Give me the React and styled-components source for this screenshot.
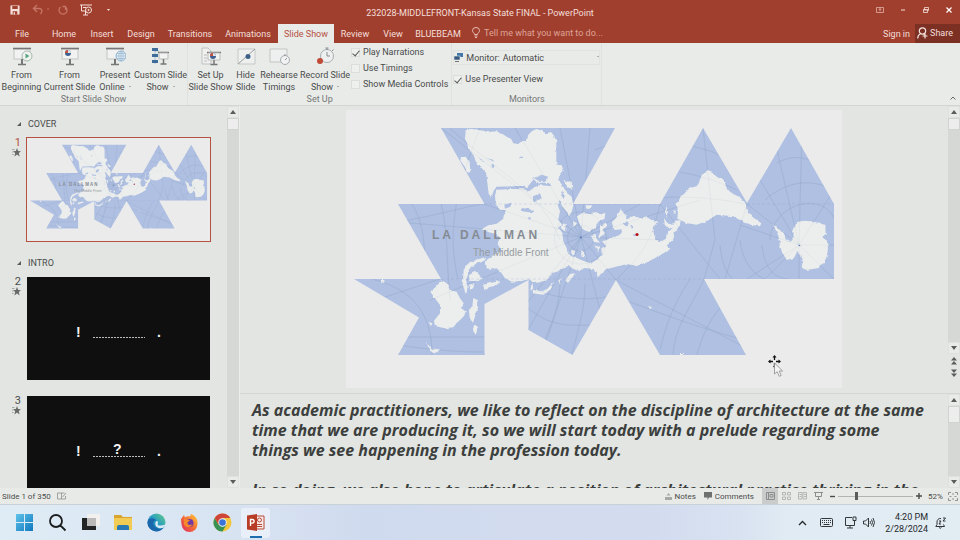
import React from 'react';
import styled, { createGlobalStyle, css } from 'styled-components';

const COLORS = {
  RED: '#a13f2e',
  RED_DARK: '#7c3024',
  RIBBON: '#e9ebe9',
  PANE: '#e2e5e2',
  SLIDE: '#ebebeb',
  LINE: '#d2d5d2',
  TRACK: '#d5d8d5',
  TEXT: '#4a4c4b',
  TEXT_LIGHT: '#757776',
  OCEAN: '#afc0e2',
  LAND: '#eceeed',
  GRID: '#8a9fcb',
};

const NOTES = `As academic practitioners, we like to reflect on the discipline of architecture at the same
time that we are producing it, so we will start today with a prelude regarding some
things we see happening in the profession today.

In so doing, we also hope to articulate a position of architectural practice thriving in the`;

const TABS = [
  { name: 'File', width: 44 },
  { name: 'Home', width: 40 },
  { name: 'Insert', width: 36 },
  { name: 'Design', width: 42 },
  { name: 'Transitions', width: 56 },
  { name: 'Animations', width: 60 },
  { name: 'Slide Show', width: 56, active: true },
  { name: 'Review', width: 42 },
  { name: 'View', width: 34 },
  { name: 'BLUEBEAM', width: 56 },
];

/* ---------- ribbon icons ---------- */

const Easel = () => (
  <g fill="none" stroke="#777">
    <rect x="3" y="3" width="16" height="10" fill="#f1f2f1" stroke="#c3c5c4" />
    <path d="M2 2.5h18" strokeWidth="1.6" />
    <path d="M11 13v5" strokeWidth="2" />
    <path d="M7 18.5h8" strokeWidth="1.5" />
  </g>
);

const Pie = ({ x, y }) => (
  <g transform={`translate(${x} ${y})`}>
    <circle r="3" fill="#3d5f92" />
    <path d="M0 0V-3A3 3 0 0 0 -3 0Z" fill="#c4543e" />
    <path d="M0 0H3A3 3 0 0 0 0 -3Z" fill="#dfe3e8" />
  </g>
);

const RIBBON_ICONS = {
  beginning: (
    <>
      <Easel />
      <circle cx="16" cy="10" r="5" fill="#f1f3f1" stroke="#a5b8ab" />
      <path d="M14.5 7.5v5l4-2.5z" fill="#57a37c" />
    </>
  ),
  current: <><Easel /><Pie x={9} y={7} /></>,
  online: (
    <>
      <Easel />
      <circle cx="17" cy="10" r="5" fill="#e8f0f6" stroke="#92b4d0" />
      <path d="M12 10h10M17 5v10M13 7.5h8M13 12.5h8M17 5c-3 3-3 7 0 10M17 5c3 3 3 7 0 10" fill="none" stroke="#92b4d0" strokeWidth=".7" />
    </>
  ),
  custom: (
    <>
      <path d="M5 3v15M5 5h4" stroke="#a9c2d8" />
      <path d="M2 2h6v3H2zM2 8h6v3H2zM2 14h6v3H2z" fill="#3f6c98" />
      <path d="M8 6.5h11" stroke="#777" strokeWidth="1.5" />
      <path d="M9 7h9v6H9z" fill="#f2f3f2" stroke="#bbb" />
      <path d="M13.5 13v5M10.5 18h6" stroke="#777" strokeWidth="1.5" />
    </>
  ),
  setup: (
    <>
      <path d="M2 2h6l3 3v13H2z" fill="#eff0ef" stroke="#bfc1c0" />
      <path d="M4 9h3M4 12h3M4 15h3" stroke="#bbb" />
      <path d="M7 6.5h14" stroke="#777" strokeWidth="1.5" />
      <path d="M8 7h12v7H8z" fill="#f2f3f2" stroke="#bbb" />
      <Pie x={13} y={10} />
      <path d="M14 14v4M10.5 18.5h7" stroke="#777" strokeWidth="1.5" />
    </>
  ),
  hide: (
    <>
      <path d="M3 3h17v15H3z" fill="#eef0ef" stroke="#c7c9c8" />
      <path d="M3 18L20 3" stroke="#9b9d9c" />
      <circle cx="13" cy="10.5" r="2.5" fill="#3d6189" />
    </>
  ),
  rehearse: (
    <>
      <path d="M2 3h17v13H2z" fill="#eef0ef" stroke="#c3c5c4" />
      <circle cx="17" cy="14" r="4.5" fill="#f1f2f1" stroke="#a6adb2" />
      <path d="M17 8v2M17 14l2-2" stroke="#8d959b" />
    </>
  ),
  record: (
    <>
      <circle cx="13" cy="10" r="6.5" fill="#eef0ef" stroke="#a6adb2" />
      <path d="M11.5 2h3M13 2v2M13 10V6M13 10h3M18 5l1.5-1.5" stroke="#858c91" />
      <circle cx="6" cy="15" r="3" fill="#bf4a36" />
    </>
  ),
};

const RibbonIcon = ({ name }) => (
  <svg width="22" height="21" viewBox="0 0 22 21" aria-hidden="true">{RIBBON_ICONS[name]}</svg>
);

/* ---------- slide artwork ---------- */

const OCEAN_PATH =
  'M441 128H615L573 204H660L703 128L747 203L791 128L834 204V279H704L746 355H660L616 280L572.5 355L528.5 330V280L484.5 304V355H398L419 317.5L354 279H441L398 204H484.5Z';

const GRATICULE =
  'M581 237L441 128M581 237L484 204M581 237L398 222M581 237L430 300M581 237L484 355M581 237L528 330M581 237L545 345M581 237L600 310M581 237L616 280M581 237L660 240M581 237L700 200M581 237L640 204M581 237L590 128M581 237L560 128M581 237L515 128' +
  'M450 128C500 175 540 190 560 240M480 128C460 180 445 225 458 279M398 222C440 215 470 205 484 204M412 204C425 225 425 250 425 279M441 204C448 230 446 255 450 300M372 279C415 290 432 315 432 355M398 345C430 350 460 352 484 352M405 337H484M385 297L440 279M528 308C548 325 565 326 590 325M535 290C560 300 590 300 607 297M560 280C560 310 548 330 545 340M585 284C585 310 578 330 572 354' +
  'M616 280L746 348M630 302C665 315 700 328 737 338M690 279C670 310 665 330 660 350M720 308C705 325 700 345 697 355M704 279C690 310 675 325 673 355M690 145C703 150 712 150 718 155M679 172C700 175 725 184 737 190M660 198C690 195 725 200 747 204M703 128L715 240L704 279M747 204L725 279M660 204L720 279M595 150L606 146' +
  'M799 245L777 150M799 245L802 129M799 245L760 180M799 245L834 190M799 245L834 245M799 245L834 279M799 245L799 279M799 245L765 279M799 245L747 279M799 245L740 225M799 245L747 204' +
  'M765 200C790 178 815 180 834 190M777 163C790 156 800 156 812 161M770 240C772 205 820 190 834 218M762 245C765 275 780 279 790 279M740 240C742 262 755 276 765 279M720 245C722 265 727 274 733 279M616 280C635 260 650 250 660 204M581 225A13 13 0 1 1 580 225M581 212A26 26 0 1 1 580 212';

const AFRO_EURASIA =
  'M362 70L375 62L400 66L415 68L430 72L455 70L470 76L487 88L498 92L505 106L520 108L532 98L545 100L550 80L562 68L575 63L590 68L603 76L618 72L628 84L634 100V170L650 172L656 188L645 202L640 216L656 236L662 252L680 266L685 292L680 312L672 325L664 310L648 290L644 276L638 290L645 310L640 335L652 352L642 360L652 374L655 400L665 420L668 436L685 448L700 452L722 461L752 470L745 484L722 480L700 490L670 474L650 480L640 490L625 494L600 518L575 524L550 514L530 519L500 521L480 511L470 496L455 481L435 486L420 471L425 456L445 442L470 430L458 408L465 390L450 377L430 372L410 364L430 352L455 347L475 332L482 306L465 305L452 290L450 262L455 245L500 243L540 244L550 252L560 244L580 232L620 234L612 226L575 222L566 214L545 240L535 234L455 236L446 248L440 266L431 258L426 215L424 196L410 180L392 160L386 142L375 128L368 110L360 92Z';

const WorldMap = () => (
  <svg viewBox="346 110 496 278" role="img" aria-label="Unfolded map of the world">
    <defs>
      <clipPath id="ocean-clip"><path d={OCEAN_PATH} /></clipPath>
      {/* roughens the straight segments into coast lines */}
      <filter id="coast" x="-5%" y="-5%" width="110%" height="110%">
        <feTurbulence type="fractalNoise" baseFrequency="0.2" numOctaves="2" seed="4" result="noise" />
        <feDisplacementMap in="SourceGraphic" in2="noise" scale="3" xChannelSelector="R" yChannelSelector="G" />
      </filter>
    </defs>
    <path d={OCEAN_PATH} fill={COLORS.OCEAN} />
    <g clipPath="url(#ocean-clip)">
      <path d={GRATICULE} fill="none" stroke={COLORS.GRID} strokeWidth=".6" opacity=".5" />
      <g fill={COLORS.LAND} filter="url(#coast)">
        <g transform="translate(345 108) scale(.3333)">
          <path d={AFRO_EURASIA} />
          <path d="M348 148L362 146L374 164L376 192L368 194L358 174L346 158Z" />
          <path d="M655 215L680 225L682 243L668 238ZM652 245L665 252L660 264ZM655 345L662 350L660 372L650 362ZM684 340L696 346L686 358ZM722 292H740V302H724ZM680 425L690 428L688 442L678 436ZM706 426L714 430L722 448L710 446Z" />
          <path d="M425 446L400 454L372 464L356 486L353 530L364 558L368 536L362 512L370 486L392 468L418 458Z" />
          <path d="M372 502L392 490L412 510L400 520L374 518ZM415 530L440 524L462 520L460 530L432 538L418 546ZM372 530L388 526L385 540L376 546ZM385 570L397 576L395 610L384 644L374 630L372 605L382 596ZM388 650L400 655L392 680L384 668ZM662 514L675 498L690 496L680 512L668 524ZM560 545L590 550L606 544L618 530L628 522L615 548L595 560L562 556ZM640 516L650 512L645 530ZM560 525L566 540L556 548Z" />
          <path d="M290 516L305 526L315 546L335 551L345 571L356 586L348 600L364 612L355 626L335 646L325 658L300 661L270 654L267 638L285 616V591L270 571L256 551L270 536Z" />
          <path d="M250 642L262 646L258 654ZM242 702L264 722L285 724L272 738L258 728ZM108 516H118V524H108Z" />
          <g fill={COLORS.OCEAN}>
            <path d="M440 168L448 170L447 180L440 178ZM524 146H534V153H524ZM478 290L500 284L496 296L480 302ZM530 300L565 305L564 314L532 310ZM566 264L585 256L590 270L572 282L562 282ZM400 150L418 158L416 162ZM425 150L446 156L444 160ZM550 328H560V334H550ZM566 210L590 200L610 206L604 220L580 218ZM648 250L660 264L654 274Z" />
          </g>
        </g>
        <g transform="translate(590 108) scale(.3333)">
          <path d="M66 342L78 330L92 304L106 320L112 334L130 324L148 330L166 325L195 342L206 342L194 352L190 370L196 395L215 400L228 392L230 376L246 362L256 338L272 337L270 352L252 376L246 398L228 414L240 424L205 445L180 458L140 474L110 468L75 478L50 482L38 492L24 508L10 482L5 465L20 455L35 440L34 424L48 416L42 402L60 390L88 382L96 364L74 366L68 354Z" />
          <path d="M-40 325L-22 315L0 318L20 315L46 316L44 332L24 342L16 360L-2 372L-18 366L-30 350ZM30 352L48 344L52 356L38 364L44 378L24 390L30 374ZM2 382L16 378L20 392L30 404L12 402ZM36 400L50 396L46 410ZM14 412L30 418L24 430Z" />
          <path d="M350 186L365 190L375 205L400 215L412 245L430 258L450 268L468 288L470 305L485 325L514 346L510 355L490 352L465 345L430 325L380 320L350 340L320 350L290 345L262 332L264 310L260 285L275 265L300 240L320 235L335 205Z" />
          <path d="M228 290L234 312L228 330ZM222 330L234 348L256 346L258 356L236 362L224 350ZM250 306L258 310L254 318Z" />
          <path d="M622 342L642 338L662 340L678 346L706 350L707 378L697 388L711 398L714 422L710 446L702 464L686 480L650 486L635 478L638 462L630 442L621 432L612 450L590 456L575 430L568 404L590 402L604 400L612 388L606 368Z" />
          <path d="M548 348L564 362L582 372L586 392L600 398L580 412L568 396L562 376Z" />
          <path d="M178 595H184V602H178ZM270 735H282V742H270Z" />
          <g fill={COLORS.OCEAN}>
            <path d="M98 346L112 340L118 350L106 354ZM120 352L132 358L126 362ZM128 376L138 380L132 386Z" />
          </g>
        </g>
      </g>
      <path d={GRATICULE} fill="none" stroke="#9fb4c4" strokeWidth=".5" opacity=".28" />
      <path d="M484 204H573M573 204H660M747 204H834M528 279H704M441 279H528" stroke={COLORS.GRID} strokeWidth=".5" strokeDasharray="3 2" opacity=".5" />
    </g>
    <circle cx="581" cy="237.5" r="1" fill="#5c7cba" />
    <circle cx="799.5" cy="245.5" r=".8" fill="#5c7cba" />
    <circle cx="637" cy="234.5" r="1.6" fill="#b3121d" />
    <CoverTitle x="432" y="239">LA DALLMAN</CoverTitle>
    <CoverSubtitle x="473" y="256">The Middle Front</CoverSubtitle>
  </svg>
);

const BlankLine = ({ question }) => (
  <svg viewBox="0 0 183 103" role="img" aria-label="Fill in the blank">
    <BlankMark x="49" y="60">!</BlankMark>
    {question && <BlankMark x="86" y="58">?</BlankMark>}
    <path d="M66 60.5h52" stroke="#bdbdbd" strokeDasharray="2 1" />
    <BlankMark x="130" y="60">.</BlankMark>
  </svg>
);

const ScrollArrow = ({ up }) => (
  <ArrowButton aria-label={up ? 'Scroll up' : 'Scroll down'}>
    <svg width="6" height="4" viewBox="0 0 6 4">
      <path d={up ? 'M0 4L3 0L6 4Z' : 'M0 0L3 4L6 0Z'} fill="#5b5d5c" />
    </svg>
  </ArrowButton>
);

const ScrollBar = ({ thumb, children }) => (
  <Bar>
    <ScrollArrow up />
    <Thumb $size={thumb} />
    <Track />
    <ScrollArrow />
    {children}
  </Bar>
);

const SlideItem = ({ number, active, children }) => (
  <Item>
    <ItemMeta $active={active}>
      {number}
      <svg width="9" height="9" viewBox="0 0 9 9">
        <path d="M5 0l1.1 2.9L9 3.2 6.8 5l.8 3.4L5 6.6 2.4 8.4 3.2 5 1 3.2l2.9-.3z" fill="#666968" />
        <path d="M0 1.5h2.5M0 4h1.5M0 6.5h1.5" stroke="#8b8e8c" strokeWidth=".7" />
      </svg>
    </ItemMeta>
    <Thumbnail $active={active} aria-label={`Slide ${number}`}>{children}</Thumbnail>
  </Item>
);

const Section = ({ name }) => (
  <SectionTitle>
    <svg width="4" height="4" viewBox="0 0 4 4"><path d="M4 0V4H0Z" fill="#5b5d5c" /></svg>
    {name}
  </SectionTitle>
);

const Large = ({ icon, width, lines, menu }) => (
  <LargeButton $width={width}>
    <RibbonIcon name={icon} />
    <span>{lines[0]}</span>
    <span>{lines[1]}{menu && <Caret />}</span>
  </LargeButton>
);

const Check = ({ label, checked }) => (
  <CheckLabel>
    <CheckBox type="checkbox" defaultChecked={checked} />
    {label}
  </CheckLabel>
);

const TitleBar = () => (
  <Title>
    <QuickAccess>
      <IconButton $width={30} aria-label="Save">
        <svg width="10" height="10" viewBox="0 0 11 11">
          <path d="M.5.5h10v10H.5z" fill="#f4dfda" />
          <path d="M2.500 1h6v3.500h-6zM3 7h5v3.500H3z" fill={COLORS.RED} />
          <path d="M4 8h1.500v2.500H4z" fill="#f4dfda" />
        </svg>
      </IconButton>
      <IconButton $width={22} aria-label="Undo">
        <svg width="18" height="11" viewBox="0 0 18 11" fill="none" stroke="#c67566" strokeWidth="1.4">
          <path d="M5 1L1.5 4.5L5 8M2 4.5h5c3 0 4 3 1.5 5.5" />
          <path d="M15 5h2" strokeWidth="1" />
        </svg>
      </IconButton>
      <IconButton $width={22} aria-label="Redo">
        <svg width="10" height="10" viewBox="0 0 10 10" fill="none" stroke="#c67566" strokeWidth="1.3">
          <path d="M2.5 2A4 4 0 1 0 7.5 2M7.5 5V1.5h-3" />
        </svg>
      </IconButton>
      <IconButton $width={24} aria-label="Start from beginning">
        <svg width="13" height="12" viewBox="0 0 13 12" fill="none" stroke="#f4dfda">
          <path d="M0 1h12M1.5 1v6h4M5.5 7v4M3 11h5M3 3.5h3" />
          <circle cx="8.5" cy="6" r="3" />
          <path d="M7.8 4.5v3l2-1.5z" fill="#f4dfda" stroke="none" />
        </svg>
      </IconButton>
      <IconButton $width={20} aria-label="Customize quick access">
        <svg width="3" height="2" viewBox="0 0 3 2"><path d="M0 0h3L1.5 2z" fill="#f4dfda" /></svg>
      </IconButton>
    </QuickAccess>
    <DocumentName>232028-MIDDLEFRONT-Kansas State FINAL - PowerPoint</DocumentName>
    <WindowButtons>
      <IconButton $width={23} aria-label="Ribbon display options">
        <svg width="8" height="6" viewBox="0 0 8 6" fill="none" stroke="#e3b0a5" strokeWidth=".8">
          <path d="M.5.5h7v5h-7zM4 1.5v3M2.8 3L4 1.5L5.2 3" />
        </svg>
      </IconButton>
      <IconButton $width={23} aria-label="Minimize">
        <svg width="4" height="2" viewBox="0 0 4 2"><path d="M0 1h4" stroke="#f4dfda" /></svg>
      </IconButton>
      <IconButton $width={23} aria-label="Restore">
        <svg width="6" height="6" viewBox="0 0 6 6" fill="none" stroke="#f4dfda" strokeWidth=".8">
          <path d="M.5 2.5h4v3h-4zM1.5 2.5v-2h4v3h-1M.5 3h4" />
        </svg>
      </IconButton>
      <IconButton $width={23} aria-label="Close">
        <svg width="6" height="6" viewBox="0 0 6 6"><path d="M.5.5l5 5M5.5.5l-5 5" stroke="#fff" strokeWidth="1.2" /></svg>
      </IconButton>
    </WindowButtons>
  </Title>
);

const TabBar = () => (
  <Tabs>
    {TABS.map(tab => (
      <Tab key={tab.name} $width={tab.width} $active={tab.active}>{tab.name}</Tab>
    ))}
    <TellMe>
      <svg width="8" height="11" viewBox="0 0 8 11" fill="none" stroke="#e8bfb6">
        <path d="M2.5 7.5C2.5 6 .5 5.5.5 3.5a3.5 3 0 0 1 7 0c0 2-2 2.5-2 4zM2.5 9h3M3 10.5h2" />
      </svg>
      <TellMeInput aria-label="Tell me" placeholder="Tell me what you want to do..." />
    </TellMe>
    <SignIn href="#signin">Sign in</SignIn>
    <Share>
      <svg width="11" height="12" viewBox="0 0 11 12" fill="none" stroke="#f6e4e0" strokeWidth="1.2">
        <circle cx="5.5" cy="4" r="3.2" />
        <path d="M.7 11.5C.7 9 2 7.5 3.5 6.8M6.5 7c.8.3 1 .6 1.3 1M8 6.5v5M5.5 9h5" />
      </svg>
      Share
    </Share>
  </Tabs>
);

const Ribbon = () => (
  <RibbonBar>
    <Group>
      <GroupBody>
        <Large icon="beginning" width={43} lines={['From', 'Beginning']} />
        <Large icon="current" width={53} lines={['From', 'Current Slide']} />
        <Large icon="online" width={38} lines={['Present', 'Online']} menu />
        <Large icon="custom" width={53} lines={['Custom Slide', 'Show']} menu />
      </GroupBody>
      <GroupName>Start Slide Show</GroupName>
    </Group>
    <Group>
      <GroupBody>
        <Large icon="setup" width={45} lines={['Set Up', 'Slide Show']} />
        <Large icon="hide" width={25} lines={['Hide', 'Slide']} />
        <Large icon="rehearse" width={42} lines={['Rehearse', 'Timings']} />
        <Large icon="record" width={50} lines={['Record Slide', 'Show']} menu />
        <Checks>
          <Check label="Play Narrations" checked />
          <Check label="Use Timings" />
          <Check label="Show Media Controls" />
        </Checks>
      </GroupBody>
      <GroupName>Set Up</GroupName>
    </Group>
    <Group>
      <MonitorBody>
        <MonitorRow>
          <svg width="9" height="9" viewBox="0 0 9 9">
            <path d="M3 0h6v4H3z" fill="#4478ab" />
            <path d="M0 3h6v4H0z" fill="#35597f" stroke="#e9ebe9" strokeWidth=".6" />
            <path d="M1 8.5h4" stroke="#777" />
          </svg>
          <label htmlFor="monitor">Monitor:</label>
          <MonitorSelect id="monitor" defaultValue="auto">
            <option value="auto">Automatic</option>
            <option value="primary">Primary Monitor</option>
          </MonitorSelect>
          <Caret />
        </MonitorRow>
        <Check label="Use Presenter View" checked />
      </MonitorBody>
      <GroupName>Monitors</GroupName>
    </Group>
    <Collapse aria-label="Collapse the ribbon">
      <svg width="6" height="4" viewBox="0 0 6 4"><path d="M.5 3.5L3 1L5.5 3.5" fill="none" stroke="#666" /></svg>
    </Collapse>
  </RibbonBar>
);

const MoveCursor = () => (
  <Cursor width="15" height="23" viewBox="0 0 15 23">
    <path d="M6.5 1v4M6.5 8v4M1 6.5h4M8 6.5h4" stroke="#111" strokeWidth="1.3" />
    <path d="M6.5 0L8.5 2.5h-4zM0 6.5L2.5 4.5v4zM13 6.5L10.5 4.5v4zM6.5 13L5 11h3z" fill="#111" />
    <path d="M6.5 8v11l2.7-2.3 2 4.6 2-.9-2-4.4h3.4z" fill="#f4f4f4" stroke="#8c8c8c" strokeWidth=".8" />
  </Cursor>
);

const StatusBar = () => (
  <Status>
    <span>Slide 1 of 350</span>
    <StatusButton $width={22} aria-label="Spelling">
      <svg width="10" height="8" viewBox="0 0 10 8" fill="none" stroke="#8d908e" strokeWidth=".8">
        <path d="M.5 1h4v6h-4zM4.5 1h3M4.5 7h4V4M5.5 5l3.5-4" />
      </svg>
    </StatusButton>
    <Spacer />
    <StatusButton>
      <svg width="7" height="7" viewBox="0 0 7 7"><path d="M3.5 0l2 2.5h-4zM0 4h7v3H0z" fill="#a5a8a6" /></svg>
      Notes
    </StatusButton>
    <StatusButton>
      <svg width="8" height="8" viewBox="0 0 8 8"><path d="M0 0h8v5.5H5L3.5 8V5.5H0z" fill="#6d706e" /></svg>
      Comments
    </StatusButton>
    <Views>
      <StatusButton $width={16} $active aria-label="Normal view">
        <svg width="9" height="8" viewBox="0 0 9 8" fill="none" stroke="#8b8e8c"><path d="M.5.5h8v7h-8zM2.5 1v6M4 2.5h3v2.5h-3z" /></svg>
      </StatusButton>
      <StatusButton $width={16} aria-label="Slide sorter">
        <svg width="9" height="8" viewBox="0 0 9 8" fill="none" stroke="#b4b7b5"><path d="M.5.5h3v2.5h-3zM5.5.5h3v2.5h-3zM.5 5h3v2.5h-3zM5.5 5h3v2.5h-3z" /></svg>
      </StatusButton>
      <StatusButton $width={16} aria-label="Reading view">
        <svg width="9" height="8" viewBox="0 0 9 8" fill="none" stroke="#b4b7b5"><path d="M.5.5h3.5v6.5H.5zM5 .5h3.5v6.5H5zM1.5 2.5h2M1.5 4.5h2M6 2.5h2M6 4.5h2" /></svg>
      </StatusButton>
      <StatusButton $width={16} aria-label="Slide show">
        <svg width="9" height="8" viewBox="0 0 9 8" fill="none" stroke="#8b8e8c"><path d="M0 .5h9M1.5 1v3.500h6V1M4.5 4.5v3M3 7.500h3" /></svg>
      </StatusButton>
    </Views>
    <StatusButton $width={12} aria-label="Zoom out">
      <svg width="5" height="5" viewBox="0 0 5 5"><path d="M0 2.5h5" stroke="#4a4c4b" strokeWidth="1.4" /></svg>
    </StatusButton>
    <Zoom type="range" aria-label="Zoom" min="0" max="100" defaultValue="24" />
    <StatusButton $width={12} aria-label="Zoom in">
      <svg width="6" height="6" viewBox="0 0 6 6"><path d="M0 3h6M3 0v6" stroke="#4a4c4b" strokeWidth="1.4" /></svg>
    </StatusButton>
    <ZoomValue>52%</ZoomValue>
    <StatusButton $width={14} aria-label="Fit slide to window">
      <svg width="10" height="9" viewBox="0 0 10 9" fill="none" stroke="#7c7f7d" strokeWidth=".8">
        <path d="M3 .5H.5V3M7 .5h2.5V3M3 8.5H.5V6M7 8.5h2.5V6M5 1v2M5 6v2M1.5 4.5h2M6.5 4.5h2" />
      </svg>
    </StatusButton>
  </Status>
);

const APPS = [
  {
    name: 'Start',
    icon: <path d="M1 1h8v8H1zM10 1h8v8h-8zM1 10h8v8H1zM10 10h8v8h-8z" fill="url(#win)" />,
  },
  {
    name: 'Search',
    icon: <path d="M14 8A6 6 0 1 1 2 8A6 6 0 1 1 14 8M12.5 12.5L17.5 17.5" fill="none" stroke="#1c1f21" strokeWidth="1.8" />,
  },
  {
    name: 'Task view',
    icon: (
      <>
        <path d="M6 1h13v12H6z" fill="#f2f1ef" />
        <path d="M1 5h14v12H1z" fill="#222426" />
        <path d="M6 5h9v8H6z" fill="#b9bab9" />
      </>
    ),
  },
  {
    name: 'File Explorer',
    icon: (
      <>
        <path d="M0 2h7l2 2h9v4H0z" fill="#d9a52f" />
        <path d="M0 5h18v12H0z" fill="#f2cb55" />
        <path d="M3 17v-3q0-2 2-2h8q2 0 2 2v3z" fill="#2878b4" />
      </>
    ),
  },
  {
    name: 'Edge',
    icon: (
      <>
        <circle cx="9.5" cy="9.5" r="9" fill="url(#edge)" />
        <path d="M1 7C4 4 8 5 9.500 7.500C6 7 5 11 8 14c2.500 2.300 6 2 8.500.500C14 18 10 19 7 18C2 16.500-.5 12 1 7z" fill="#1a67ac" />
        <path d="M9.500 8c1.500.2 2 1.500 1.200 3c-.5 1.500 3 2.500 7.600.500c-.5 1.500-1 2.500-2 3.200c-3.500 1.300-8-.2-8-4c0-1.200.5-2 1.200-2.700z" fill="#dbeaf4" />
      </>
    ),
  },
  {
    name: 'Firefox',
    icon: (
      <>
        <path d="M1 6L4 2l1 2.5C7 3 8 3 10 3.5L11 1c5 2 7 6 6.5 10A8 8 0 0 1 1.5 11C1.2 9 1 8 1 6z" fill="url(#fox)" />
        <circle cx="9.5" cy="10" r="4" fill="#733ba4" />
        <path d="M4 6c3 0 4 .5 6 1.5-1 1-2.5 1-2.5 2.5 0 2 3 3 5 1-1 4-7 4-8.5.5z" fill="#f58a2c" />
      </>
    ),
  },
  {
    name: 'Chrome',
    icon: (
      <>
        <circle cx="9.5" cy="9.5" r="9" fill="#f4c63d" />
        <path d="M1.7 5A9 9 0 0 0 9.5 18.5L13.4 11.8H5.6Z" fill="#389254" />
        <path d="M1.7 5A9 9 0 0 1 17.3 5H9.5L5.6 11.8Z" fill="#cf4537" />
        <circle cx="9.5" cy="9.5" r="4.2" fill="#f3f3f3" />
        <circle cx="9.5" cy="9.5" r="3.3" fill="#3a74d8" />
      </>
    ),
  },
  {
    name: 'PowerPoint',
    active: true,
    icon: (
      <>
        <path d="M9 3h9v13H9z" fill="#f6eae7" stroke="#b94b38" />
        <circle cx="13.5" cy="7" r="2" fill="none" stroke="#b94b38" />
        <path d="M11 11.5h5M11 13.5h5" stroke="#b94b38" />
        <path d="M1 2.5L11 1v17L1 16.5z" fill="#b83b25" />
        <path d="M4.500 13V6.500h1.800a1.800 1.800 0 0 1 0 3.600H4.500" fill="none" stroke="#fff" strokeWidth="1.4" />
      </>
    ),
  },
];

const TaskBar = () => (
  <Task>
    <svg width="0" height="0" aria-hidden="true">
      <defs>
        <linearGradient id="win" x1="0" y1="0" x2="1" y2="1">
          <stop offset="0" stopColor="#5fc4ea" /><stop offset="1" stopColor="#1278bf" />
        </linearGradient>
        <linearGradient id="edge" x1="0" y1="1" x2="1" y2="0">
          <stop offset="0" stopColor="#1763ac" /><stop offset=".5" stopColor="#279cc5" /><stop offset="1" stopColor="#67cf83" />
        </linearGradient>
        <linearGradient id="fox" x1="1" y1="0" x2="0" y2="1">
          <stop offset="0" stopColor="#ffd23c" /><stop offset=".5" stopColor="#f46c35" /><stop offset="1" stopColor="#dd2865" />
        </linearGradient>
      </defs>
    </svg>
    {APPS.map(app => (
      <AppButton key={app.name} $active={app.active} aria-label={app.name}>
        <svg width="19" height="19" viewBox="0 0 19 19">{app.icon}</svg>
      </AppButton>
    ))}
    <Spacer />
    <TrayButton $width={24} aria-label="Hidden icons">
      <svg width="9" height="6" viewBox="0 0 9 6"><path d="M1 5L4.5 1.5L8 5" fill="none" stroke="#26292b" strokeWidth="1.3" /></svg>
    </TrayButton>
    <TrayButton $width={24} aria-label="Touch keyboard">
      <svg width="13" height="9" viewBox="0 0 13 9" fill="none" stroke="#33373a">
        <rect x=".5" y=".5" width="12" height="8" rx="1" />
        <path d="M2 2.5h9M2 4.5h9" strokeDasharray="1 1" />
        <path d="M3.5 6.5h6" />
      </svg>
    </TrayButton>
    <TrayButton $width={24} aria-label="Network">
      <svg width="13" height="13" viewBox="0 0 13 13" fill="none" stroke="#33373a">
        <path d="M8 1.5H1.5v8h9V8M3 12h6M6 9.5V12" />
        <path d="M9 1h3v3.5H9zM10.5 4.5V8" />
      </svg>
    </TrayButton>
    <TrayButton $width={13} aria-label="Volume">
      <svg width="12" height="11" viewBox="0 0 12 11" fill="none" stroke="#33373a">
        <path d="M.5 4h2L5.5 1v9l-3-3h-2zM7 4q1 1.5 0 3M8.5 2.5q2 3 0 6M10 1q3 4.5 0 9" />
      </svg>
    </TrayButton>
    <Clock><span>4:20 PM</span><span>2/28/2024</span></Clock>
    <TrayButton $width={24} aria-label="Notifications">
      <svg width="11" height="12" viewBox="0 0 11 12" fill="none" stroke="#33373a">
        <path d="M6 1.5C3.5 1 2 3 2 5v2.5L.8 9.5h8.7L8.5 7.5M4 10.5q1.3 1.5 2.5 0M4 4h2L4 7h2M8 1h2.5L8 4h2.5" />
      </svg>
    </TrayButton>
  </Task>
);

const App = () => (
  <Window>
    <GlobalStyle />
    <TitleBar />
    <TabBar />
    <Ribbon />
    <Main>
      <SlidesPane>
        <SlideList>
          <Section name="COVER" />
          <SlideItem number={1} active><WorldMap /></SlideItem>
          <Section name="INTRO" />
          <SlideItem number={2}><BlankLine /></SlideItem>
          <SlideItem number={3}><BlankLine question /></SlideItem>
        </SlideList>
        <ScrollBar thumb={12} />
      </SlidesPane>
      <Editor>
        <Workspace>
          <Canvas>
            <Slide>
              <WorldMap />
              <MoveCursor />
            </Slide>
          </Canvas>
          <ScrollBar thumb={12}>
            <PageButtons>
              <PageButton aria-label="Previous slide">
                <svg width="6" height="8" viewBox="0 0 6 8"><path d="M0 3.5L3 0L6 3.5ZM0 7.5L3 4L6 7.5Z" fill="#5b5d5c" /></svg>
              </PageButton>
              <PageButton aria-label="Next slide">
                <svg width="6" height="8" viewBox="0 0 6 8"><path d="M0 .5L3 4L6 .5ZM0 4.5L3 8L6 4.5Z" fill="#5b5d5c" /></svg>
              </PageButton>
            </PageButtons>
          </ScrollBar>
        </Workspace>
        <NotesPane>
          <NotesText aria-label="Notes" defaultValue={NOTES} spellCheck={false} />
          <ScrollBar thumb={17} />
        </NotesPane>
      </Editor>
    </Main>
    <StatusBar />
    <TaskBar />
  </Window>
);

export default App;

const GlobalStyle = createGlobalStyle`
  * {
    box-sizing: border-box;
  }
  body {
    margin: 0;
    color: ${COLORS.TEXT};
    font-family: Roboto, 'Open Sans', sans-serif;
    font-size: 9px;
  }
  button, input, select, textarea {
    margin: 0;
    padding: 0;
    border: 0;
    background: none;
    color: inherit;
    font: inherit;
  }
  svg {
    flex: none;
  }
`;

const Window = styled.div`
  display: flex;
  flex-direction: column;
  height: 100vh;
  overflow: hidden;
  background: ${COLORS.PANE};
`;

const center = css`
  display: flex;
  align-items: center;
  justify-content: center;
`;

const Title = styled.header`
  display: grid;
  grid-template-columns: 1fr auto 1fr;
  align-items: center;
  height: 24px;
  padding-top: 1px;
  background: ${COLORS.RED};
  color: #f4dfda;
`;

const QuickAccess = styled.div`
  display: flex;
  align-items: flex-start;
  height: 22px;
`;

const WindowButtons = styled(QuickAccess)`
  justify-content: flex-end;
`;

const IconButton = styled.button`
  ${center}
  width: ${p => p.$width}px;
  height: 16px;
`;

const DocumentName = styled.div`
  white-space: nowrap;
`;

const Tabs = styled.nav`
  display: flex;
  height: 19px;
  background: ${COLORS.RED};
  color: #f4dfda;
`;

const Tab = styled.button`
  width: ${p => p.$width}px;
  white-space: nowrap;
  ${p => p.$active && css`
    background: ${COLORS.RIBBON};
    color: #b5523f;
  `}
`;

const TellMe = styled.div`
  display: flex;
  flex: 1;
  align-items: center;
  gap: 4px;
  padding: 0 0 2px 6px;
`;

const TellMeInput = styled.input`
  flex: 1;
  min-width: 0;
  &::placeholder {
    color: #dea397;
    opacity: 1;
  }
`;

const SignIn = styled.a`
  ${center}
  padding: 0 5px;
  color: inherit;
  text-decoration: none;
`;

const Share = styled.button`
  ${center}
  gap: 2px;
  width: 45px;
  padding: 0 5px 2px 0;
  background: ${COLORS.RED_DARK};
`;

const RibbonBar = styled.div`
  display: flex;
  height: 63px;
  background: ${COLORS.RIBBON};
  border-bottom: 1px solid ${COLORS.LINE};
`;

const Group = styled.section`
  display: flex;
  flex-direction: column;
  border-right: 1px solid #dfe1df;
`;

const GroupBody = styled.div`
  display: flex;
  flex: 1;
`;

const GroupName = styled.div`
  height: 12px;
  color: ${COLORS.TEXT_LIGHT};
  line-height: 12px;
  text-align: center;
`;

const LargeButton = styled.button`
  display: flex;
  flex-direction: column;
  align-items: center;
  width: ${p => p.$width}px;
  padding-top: 3px;
  line-height: 12px;
  white-space: nowrap;
  svg {
    margin-bottom: 2px;
  }
`;

const Caret = styled.i`
  display: inline-block;
  margin: 0 0 2px 4px;
  border: 1px solid transparent;
  border-top-color: #777;
`;

const Checks = styled.div`
  display: flex;
  flex-direction: column;
  padding: 1px 3px 0 1px;
`;

const CheckLabel = styled.label`
  display: flex;
  align-items: center;
  gap: 3px;
  height: 16px;
  white-space: nowrap;
`;

const CheckBox = styled.input`
  appearance: none;
  width: 9px;
  height: 9px;
  border: 1px solid #dcdedd;
  background: #eef0ee;
  &:checked::before {
    content: '';
    display: block;
    width: 3px;
    height: 6px;
    margin-left: 2px;
    border: solid #555;
    border-width: 0 1px 1px 0;
    rotate: 40deg;
  }
`;

const MonitorBody = styled.div`
  flex: 1;
  width: 149px;
  padding: 7px 1px 0;
`;

const MonitorRow = styled.div`
  display: flex;
  align-items: center;
  gap: 3px;
  height: 15px;
  margin-bottom: 6px;
  border: 1px solid #e1e3e1;
`;

const MonitorSelect = styled.select`
  appearance: none;
  flex: 1;
`;

const Collapse = styled.button`
  align-self: flex-end;
  margin-left: auto;
  padding: 3px 4px;
`;

const Main = styled.main`
  display: flex;
  flex: 1;
  min-height: 0;
`;

const SlidesPane = styled.aside`
  display: flex;
  width: 25%;
  border-right: 1px solid #eceeec;
`;

const SlideList = styled.div`
  flex: 1;
  min-width: 0;
  padding: 9px 16px 0 0;
  overflow: hidden;
`;

const SectionTitle = styled.h2`
  display: flex;
  align-items: center;
  gap: 7px;
  height: 18px;
  margin: 0 0 4px;
  padding-left: 17px;
  font-size: 9px;
  font-weight: 400;
`;

const Item = styled.div`
  display: grid;
  grid-template-columns: 26px 1fr;
  margin-bottom: 14px;
  & + h2 {
    margin-top: -2px;
  }
`;

const ItemMeta = styled.div`
  display: flex;
  flex-direction: column;
  align-items: flex-end;
  padding-right: 5px;
  color: ${p => (p.$active ? '#b5523f' : COLORS.TEXT)};
  font-size: 11px;
  line-height: 11px;
`;

const Thumbnail = styled.button`
  display: block;
  aspect-ratio: 185 / 105;
  border: 1px solid ${p => (p.$active ? '#b5523f' : 'transparent')};
  background: ${p => (p.$active ? COLORS.SLIDE : '#0f0f0f')};
  background-clip: padding-box;
  svg {
    display: block;
    width: 100%;
    height: 100%;
  }
`;

const Bar = styled.div`
  display: flex;
  flex-direction: column;
  flex: none;
  width: 12px;
`;

const ArrowButton = styled.button`
  ${center}
  height: 12px;
  border: 1px solid #dfe1df;
  background: ${COLORS.RIBBON};
`;

const Thumb = styled.div`
  height: ${p => p.$size}px;
  border: 1px solid #d0d3d0;
  background: #ecedec;
`;

const Track = styled.div`
  flex: 1;
  background: ${COLORS.TRACK};
`;

const PageButtons = styled.div`
  display: flex;
  flex-direction: column;
  padding: 1px 0 14px;
`;

const PageButton = styled.button`
  ${center}
  height: 12px;
`;

const Editor = styled.section`
  display: flex;
  flex: 1;
  flex-direction: column;
  min-width: 0;
`;

const Workspace = styled.div`
  display: flex;
  flex: 1;
  min-height: 0;
  border-bottom: 1px solid ${COLORS.LINE};
`;

const Canvas = styled.div`
  display: flex;
  flex: 1;
  justify-content: center;
  padding: 4px 0 5px;
`;

const Slide = styled.div`
  position: relative;
  height: 100%;
  aspect-ratio: 496 / 278;
  background: ${COLORS.SLIDE};
  > svg:first-child {
    display: block;
    width: 100%;
    height: 100%;
  }
`;

const Cursor = styled.svg`
  position: absolute;
  top: 88%;
  left: 85%;
`;

const CoverTitle = styled.text`
  fill: #858b93;
  font: bold 12px 'Liberation Sans', sans-serif;
  letter-spacing: 3px;
`;

const CoverSubtitle = styled.text`
  fill: #979c9f;
  font: 10px 'Liberation Sans', sans-serif;
`;

const BlankMark = styled.text`
  fill: #f2f2f2;
  font: bold 14px 'Liberation Sans', sans-serif;
`;

const NotesPane = styled.div`
  display: flex;
  flex: 0 0 94px;
`;

const NotesText = styled.textarea`
  flex: 1;
  padding: 6px 0 0 12px;
  overflow: hidden;
  resize: none;
  color: #3c3f3d;
  font-family: 'Open Sans', 'Noto Sans', sans-serif;
  font-size: 16px;
  font-style: italic;
  font-weight: 700;
  line-height: 20px;
  white-space: pre;
`;

const Status = styled.footer`
  display: flex;
  align-items: center;
  height: 16px;
  padding-left: 2px;
  background: #e8eae8;
  font-size: 8px;
`;

const Spacer = styled.div`
  flex: 1;
`;

const StatusButton = styled.button`
  ${center}
  gap: 3px;
  height: 16px;
  margin-right: ${p => (p.$width ? 0 : 8)}px;
  ${p => p.$width && css`width: ${p.$width}px;`}
  ${p => p.$active && css`background: #c9ccca;`}
`;

const Views = styled.div`
  display: flex;
`;

const Zoom = styled.input`
  appearance: none;
  width: 75px;
  height: 16px;
  background: linear-gradient(#b1b4b2, #b1b4b2) center / 100% 1px no-repeat;
  &::-webkit-slider-thumb {
    appearance: none;
    width: 3px;
    height: 8px;
    background: #5b5d5c;
  }
`;

const ZoomValue = styled.span`
  width: 21px;
  text-align: center;
`;

const Task = styled.footer`
  display: flex;
  align-items: center;
  height: 36px;
  padding-left: 8px;
  border-top: 1px solid #c8d0d8;
  background: linear-gradient(90deg, #dfecf5, #d8e3f2 25%, #d0daee 38%, #d3dcef 68%, #d9e2f1 77%, #e0ebf3 82%, #e1ecf3);
`;

const AppButton = styled.button`
  ${center}
  width: 29px;
  height: 30px;
  margin: 0 2px;
  border-radius: 3px;
  ${p => p.$active && css`
    background: linear-gradient(#1d6cb0, #1d6cb0) center bottom / 12px 2px no-repeat, #e9eff8;
  `}
`;

const TrayButton = styled.button`
  ${center}
  width: ${p => p.$width}px;
  height: 30px;
  &:last-child {
    margin-right: 8px;
  }
`;

const Clock = styled.time`
  display: flex;
  flex-direction: column;
  width: 53px;
  color: #26292b;
  line-height: 12px;
  text-align: right;
`;
